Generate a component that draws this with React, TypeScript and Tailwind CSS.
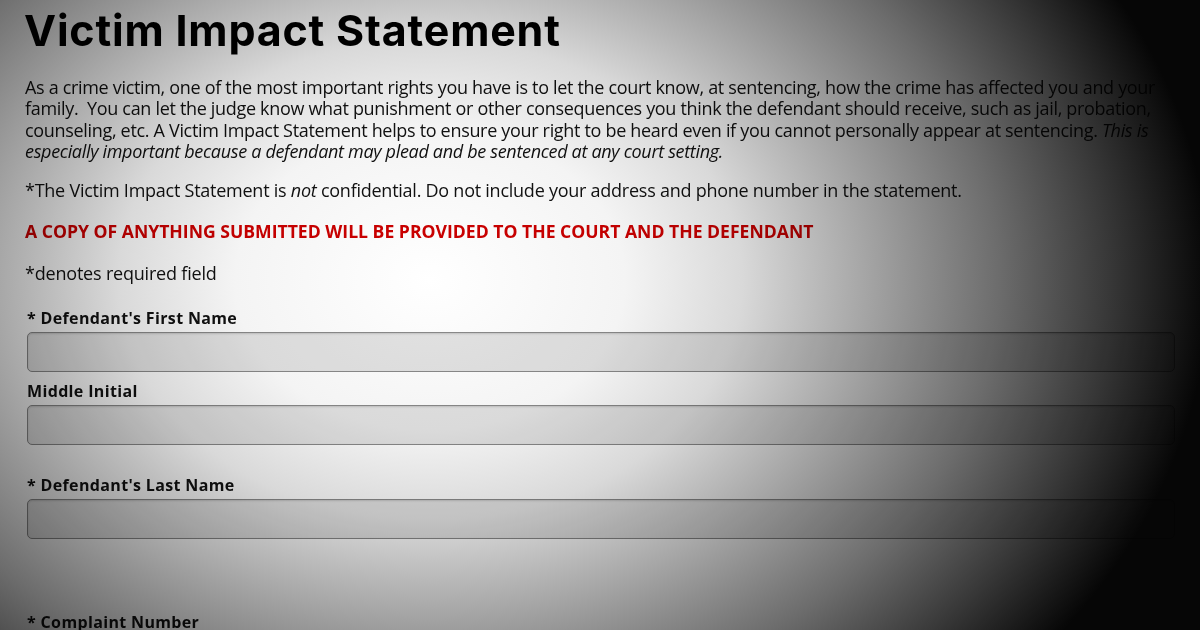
const body = { fontFamily: '"Open Sans", "Noto Sans", sans-serif' }
const label = { fontFamily: '"Open Sans", "Liberation Sans", sans-serif' }

function Field({ text, className = '' }: { text: string; className?: string }) {
  return (
    <div className={className}>
      <label style={label} className="block pl-[2px] font-bold text-[16px] leading-[20px] tracking-[0.35px] text-[#111]">
        {text}
      </label>
      <div className="mt-[4px] ml-[2px] h-[40px] rounded-[5px] border-[1.5px] border-[#8a8a8a] bg-[#e4e4e4] shadow-[inset_0_1px_2px_rgba(0,0,0,0.15)]" />
    </div>
  )
}

export default function App() {
  return (
    <div className="relative w-[1200px] h-[630px] overflow-hidden bg-white">
      <div className="pl-[25px] pr-[25px]">
        <h1
          style={{ fontFamily: 'Inter, "DejaVu Sans", sans-serif' }}
          className="pt-[4px] -ml-[1px] font-bold text-[43px] leading-[52px] tracking-[0.8px] text-black"
        >
          Victim Impact Statement
        </h1>

        <p style={body} className="mt-[21px] whitespace-nowrap text-[18px] leading-[21.3px] text-[#111] tracking-[-0.32px]">
          As a crime victim, one of the most important rights you have is to let the court know, at sentencing, how the crime has affected you and your
          <br />
          family.&nbsp; You can let the judge know what punishment or other consequences you think the defendant should receive, such as jail, probation,
          <br />
          counseling, etc. A Victim Impact Statement helps to ensure your right to be heard even if you cannot personally appear at sentencing. <em>This is</em>
          <br />
          <em>especially important because a defendant may plead and be sentenced at any court setting.</em>
        </p>

        <p style={body} className="mt-[18px] text-[18px] leading-[21px] text-[#111] tracking-[-0.25px]">
          *The Victim Impact Statement is <em>not</em> confidential. Do not include your address and phone number in the statement.
        </p>

        <p style={label} className="mt-[20px] font-bold text-[17.6px] leading-[21px] text-[#cc0000]">
          A COPY OF ANYTHING SUBMITTED WILL BE PROVIDED TO THE COURT AND THE DEFENDANT
        </p>

        <p style={body} className="mt-[21px] text-[18px] leading-[21px] text-[#111] tracking-[-0.2px]">
          *denotes required field
        </p>

        <Field text="* Defendant's First Name" className="mt-[24px]" />
        <Field text="Middle Initial" className="mt-[9px]" />
        <Field text="* Defendant's Last Name" className="mt-[30px]" />
        <Field text="* Complaint Number" className="mt-[73px]" />
      </div>

      <div className="pointer-events-none absolute inset-0 mix-blend-multiply bg-[radial-gradient(ellipse_780px_600px_at_430px_280px,#ffffff_0%,#f4f4f4_25%,#d9d9d9_40%,#a8a8a8_55%,#6c6c6c_73%,#383838_87%,#060606_100%)]" />
    </div>
  )
}
